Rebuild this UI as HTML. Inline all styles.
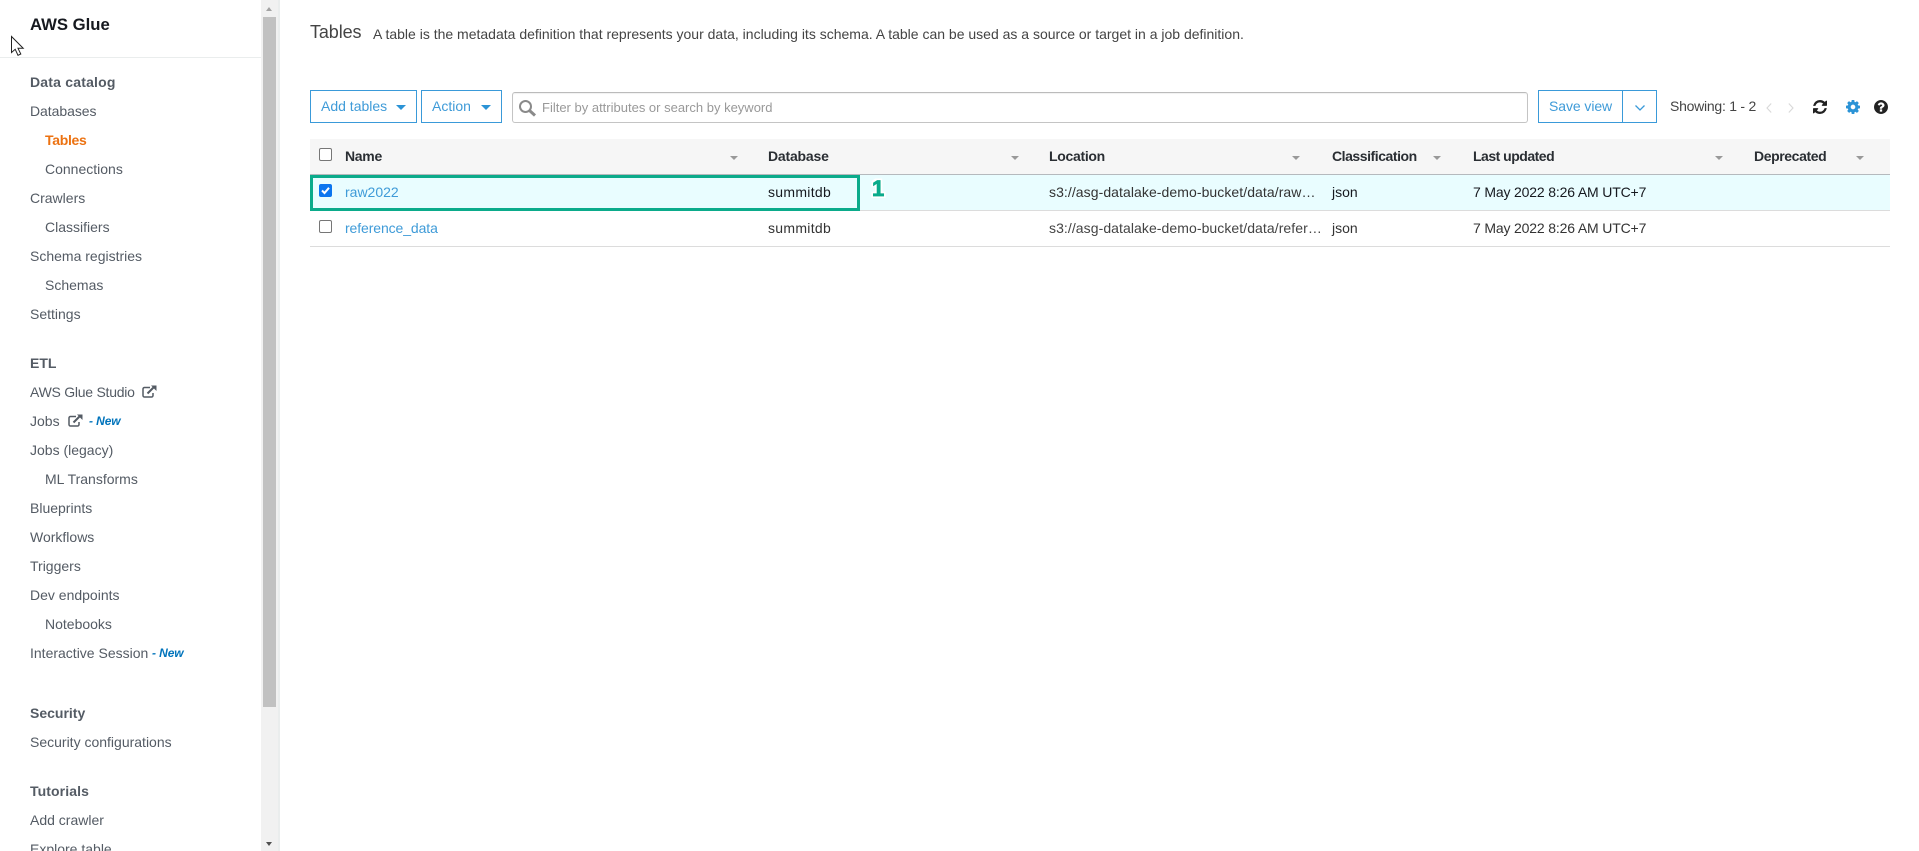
<!DOCTYPE html>
<html><head><meta charset="utf-8"><title>AWS Glue Tables</title>
<style>
html,body{margin:0;padding:0;background:#fff;width:1919px;height:851px;overflow:hidden}
body{position:relative;font-family:"Liberation Sans",Arial,sans-serif;font-size:14px;color:#545b64}
.t{position:absolute;line-height:20px;white-space:nowrap}
.b{font-weight:bold}
.h{font-weight:bold;color:#2a2e33;letter-spacing:-.3px}
.d{color:#16191f}
.l{color:#3f9bd8}
.r{position:absolute}
.c{position:absolute;width:0;height:0;border-left:4px solid transparent;border-right:4px solid transparent;border-top:4px solid #999}
.bc{position:absolute;width:0;height:0;border-left:5px solid transparent;border-right:5px solid transparent;border-top:5px solid #2b93d6}
.cb{position:absolute;box-sizing:border-box;left:319px;width:13px;height:13px;border:1px solid #767676;border-radius:2px;background:#fff}
svg{position:absolute;display:block}
.n{position:absolute;color:#0073bb;font-weight:bold;font-style:italic;font-size:12px;line-height:20px;white-space:nowrap;letter-spacing:-.1px}
</style></head><body>

<!-- sidebar -->
<div class="r" style="left:0;top:57px;width:261px;height:1px;background:#eaeded"></div>
<div class="r" style="left:261px;top:0;width:17px;height:851px;background:#f1f1f1"></div>
<div class="r" style="left:278px;top:0;width:2px;height:851px;background:#eaeded"></div>
<div class="r" style="left:263px;top:17px;width:13px;height:690px;background:#c1c1c1"></div>
<div class="r" style="left:266px;top:7px;width:0;height:0;border-left:3.5px solid transparent;border-right:3.5px solid transparent;border-bottom:4px solid #a3a3a3"></div>
<div class="r" style="left:266px;top:842px;width:0;height:0;border-left:3.5px solid transparent;border-right:3.5px solid transparent;border-top:4px solid #505050"></div>

<div class="t b" style="left:30px;top:15px;font-size:16.7px;color:#16191f">AWS Glue</div>
<div class="t b" style="left:30px;top:72px;color:#545b64;letter-spacing:.2px">Data catalog</div>
<div class="t" style="left:30px;top:101px;letter-spacing:-.05px">Databases</div>
<div class="t b" style="left:45px;top:130px;color:#ec7211;letter-spacing:-.3px">Tables</div>
<div class="t" style="left:45px;top:159px">Connections</div>
<div class="t" style="left:30px;top:188px">Crawlers</div>
<div class="t" style="left:45px;top:217px">Classifiers</div>
<div class="t" style="left:30px;top:246px">Schema registries</div>
<div class="t" style="left:45px;top:275px">Schemas</div>
<div class="t" style="left:30px;top:304px">Settings</div>
<div class="t b" style="left:30px;top:353px">ETL</div>
<div class="t" style="left:30px;top:382px;letter-spacing:-.25px">AWS Glue Studio</div>
<div class="t" style="left:30px;top:411px">Jobs</div>
<div class="t" style="left:30px;top:440px">Jobs (legacy)</div>
<div class="t" style="left:45px;top:469px">ML Transforms</div>
<div class="t" style="left:30px;top:498px">Blueprints</div>
<div class="t" style="left:30px;top:527px">Workflows</div>
<div class="t" style="left:30px;top:556px">Triggers</div>
<div class="t" style="left:30px;top:585px">Dev endpoints</div>
<div class="t" style="left:45px;top:614px">Notebooks</div>
<div class="t" style="left:30px;top:643px">Interactive Session</div>
<div class="t b" style="left:30px;top:703px">Security</div>
<div class="t" style="left:30px;top:732px">Security configurations</div>
<div class="t b" style="left:30px;top:781px;letter-spacing:.1px">Tutorials</div>
<div class="t" style="left:30px;top:810px">Add crawler</div>
<div class="t" style="left:30px;top:839px">Explore table</div>

<div class="n" style="left:89px;top:411px">- New</div>
<div class="n" style="left:152px;top:643px">- New</div>

<svg style="left:142px;top:385px" width="15" height="13" viewBox="0 0 15 13" fill="none" stroke="#545b64"><path d="M8 2.500H2.500a1.500 1.500 0 0 0-1.500 1.500v6.500a1.500 1.500 0 0 0 1.500 1.500h7a1.500 1.500 0 0 0 1.500-1.500V8" stroke-width="1.500"/><path d="M5.500 8.500L12 2" stroke-width="2"/><path d="M9 .5h5.500V6z" fill="#545b64" stroke="none"/></svg>
<svg style="left:68px;top:414px" width="15" height="13" viewBox="0 0 15 13" fill="none" stroke="#545b64"><path d="M8 2.500H2.500a1.500 1.500 0 0 0-1.500 1.500v6.500a1.500 1.500 0 0 0 1.500 1.500h7a1.500 1.500 0 0 0 1.500-1.500V8" stroke-width="1.500"/><path d="M5.500 8.500L12 2" stroke-width="2"/><path d="M9 .5h5.500V6z" fill="#545b64" stroke="none"/></svg>

<!-- cursor -->
<svg style="left:10px;top:35px" width="15" height="22" viewBox="0 0 15 22"><path d="M1.500 1.500V17.500L5.200 14.300L8 20.300L10.800 19L8 13.300H13.200Z" fill="#fff" stroke="#222" stroke-width="1"/></svg>

<!-- header -->
<div class="t" style="left:310px;top:22px;font-size:18px;color:#444;letter-spacing:-.1px">Tables</div>
<div class="t" style="left:373px;top:24px;font-size:14px;color:#444">A table is the metadata definition that represents your data, including its schema. A table can be used as a source or target in a job definition.</div>

<!-- toolbar -->
<div class="r" style="box-sizing:border-box;left:310px;top:90px;width:107px;height:33px;border:1px solid #3a9ad9"></div>
<div class="t l" style="left:321px;top:96px">Add tables</div>
<div class="bc" style="left:396px;top:105px"></div>
<div class="r" style="box-sizing:border-box;left:421px;top:90px;width:81px;height:33px;border:1px solid #3a9ad9"></div>
<div class="t l" style="left:432px;top:96px">Action</div>
<div class="bc" style="left:481px;top:105px"></div>

<div class="r" style="box-sizing:border-box;left:512px;top:92px;width:1016px;height:31px;border:1px solid #c4c4c4;border-top-color:#bbb;border-radius:3px;box-shadow:inset 0 1px 1px rgba(0,0,0,.06)"></div>
<svg style="left:518px;top:99px" width="19" height="18" viewBox="0 0 19 18" fill="none" stroke="#8a8a8a"><circle cx="7.500" cy="7.500" r="5.500" stroke-width="2"/><path d="M11.500 11.500L17 16.500" stroke-width="3"/></svg>
<div class="t" style="left:542px;top:98px;font-size:13px;color:#999">Filter by attributes or search by keyword</div>

<div class="r" style="box-sizing:border-box;left:1538px;top:90px;width:85px;height:33px;border:1px solid #3a9ad9"></div>
<div class="r" style="box-sizing:border-box;left:1622px;top:90px;width:35px;height:33px;border:1px solid #3a9ad9"></div>
<div class="t l" style="left:1549px;top:96px;letter-spacing:-.08px">Save view</div>
<svg style="left:1634px;top:104px" width="12" height="8" viewBox="0 0 12 8" fill="none" stroke="#3a9ad9" stroke-width="1.300"><path d="M1.500 1.500L6 6L10.500 1.500"/></svg>
<div class="t" style="left:1670px;top:96px;color:#444;letter-spacing:-.25px">Showing: 1 - 2</div>
<svg style="left:1766px;top:103px" width="6" height="10" viewBox="0 0 6 10" fill="none" stroke="#d8d8d8" stroke-width="1.100"><path d="M5.200 .5L1 5L5.200 9.500"/></svg>
<svg style="left:1788px;top:103px" width="6" height="10" viewBox="0 0 6 10" fill="none" stroke="#d8d8d8" stroke-width="1.100"><path d="M.8 .5L5 5L.8 9.500"/></svg>
<svg style="left:1813px;top:100px" width="14" height="14" viewBox="128 128 1536 1536" fill="#222"><path d="M1639 1056q0 5-1 7-64 268-268 434.500t-478 166.500q-146 0-282.500-55t-243.500-157l-129 129q-19 19-45 19t-45-19-19-45v-448q0-26 19-45t45-19h448q26 0 45 19t19 45-19 45l-137 137q71 66 161 102t187 36q134 0 250-65t186-179q11-17 53-117 8-23 30-23h192q13 0 22.500 9.500t9.500 22.500zm25-800v448q0 26-19 45t-45 19h-448q-26 0-45-19t-19-45 19-45l138-138q-148-137-349-137-134 0-250 65t-186 179q-11 17-53 117-8 23-30 23h-199q-13 0-22.500-9.500t-9.500-22.500v-7q65-268 270-434.500t480-166.500q146 0 284 55.500t245 156.500l130-129q19-19 45-19t45 19 19 45z"/></svg>
<svg style="left:1846px;top:100px" width="14" height="14" viewBox="128 128 1536 1536" fill="#2b93d6"><path d="M1152 896q0-106-75-181t-181-75-181 75-75 181 75 181 181 75 181-75 75-181zm512-109v222q0 12-8 23t-20 13l-185 28q-19 54-39 91 35 50 107 138 10 12 10 25t-9 23q-27 37-99 108t-94 71q-12 0-26-9l-138-108q-44 23-91 38-16 136-29 186-7 28-36 28h-222q-14 0-24.500-8.500t-11.500-21.500l-28-184q-49-16-90-37l-141 107q-10 9-25 9-14 0-25-11-126-114-165-168-7-10-7-23 0-12 8-23 15-21 51-66.500t54-70.500q-27-50-41-99l-183-27q-13-2-21-12.500t-8-23.500v-222q0-12 8-23t19-13l186-28q14-46 39-92-40-57-107-138-10-12-10-24 0-10 9-23 26-36 98.500-107.500t94.500-71.500q13 0 26 10l138 107q44-23 91-38 16-136 29-186 7-28 36-28h222q14 0 24.500 8.500t11.500 21.500l28 184q49 16 90 37l142-107q9-9 24-9 13 0 25 10 129 119 165 170 7 8 7 22 0 12-8 23-15 21-51 66.500t-54 70.500q26 50 41 98l183 28q13 2 21 12.500t8 23.500z"/></svg>
<svg style="left:1874px;top:100px" width="14" height="14" viewBox="128 128 1536 1536" fill="#222"><path d="M1024 1376v-192q0-14-9-23t-23-9h-192q-14 0-23 9t-9 23v192q0 14 9 23t23 9h192q14 0 23-9t9-23zm256-672q0-88-55.500-163t-138.500-116-170-41q-243 0-371 213-15 24 8 42l132 100q7 6 19 6 16 0 25-12 53-68 86-92 34-24 86-24 48 0 85.500 26t37.500 59q0 38-20 61t-68 45q-63 28-115.500 86.500t-52.500 125.500v36q0 14 9 23t23 9h192q14 0 23-9t9-23q0-19 21.500-49.500t54.500-49.500q32-18 49-28.500t46-35 44.500-48 28-60.500 12.500-81zm384 192q0 209-103 385.500t-279.500 279.500-385.500 103-385.500-103-279.500-279.500-103-385.500 103-385.500 279.500-279.500 385.500-103 385.500 103 279.500 279.500 103 385.500z"/></svg>

<!-- table -->
<div class="r" style="left:310px;top:139px;width:1580px;height:35px;background:#f6f6f6"></div>
<div class="r" style="left:310px;top:174px;width:1580px;height:1px;background:#b5b9bd"></div>
<div class="r" style="left:310px;top:175px;width:1580px;height:35px;background:#e9fdff"></div>
<div class="r" style="left:310px;top:210px;width:1580px;height:1px;background:#dcdcdc"></div>
<div class="r" style="left:310px;top:246px;width:1580px;height:1px;background:#dcdcdc"></div>

<div class="cb" style="top:148px"></div>
<div class="t h" style="left:345px;top:146px">Name</div>
<div class="t h" style="left:768px;top:146px;letter-spacing:-.2px">Database</div>
<div class="t h" style="left:1049px;top:146px">Location</div>
<div class="t h" style="left:1332px;top:146px;letter-spacing:-.45px">Classification</div>
<div class="t h" style="left:1473px;top:146px;letter-spacing:-.5px">Last updated</div>
<div class="t h" style="left:1754px;top:146px;letter-spacing:-.4px">Deprecated</div>
<div class="c" style="left:730px;top:156px"></div>
<div class="c" style="left:1011px;top:156px"></div>
<div class="c" style="left:1292px;top:156px"></div>
<div class="c" style="left:1433px;top:156px"></div>
<div class="c" style="left:1715px;top:156px"></div>
<div class="c" style="left:1856px;top:156px"></div>

<div class="cb" style="top:184px;background:#0b76ef;border-color:#0b76ef"></div>
<svg style="left:319px;top:184px" width="13" height="13" viewBox="0 0 13 13" fill="none" stroke="#fff" stroke-width="2"><path d="M3 6.500L5.500 9L10 3.800"/></svg>
<div class="t l" style="left:345px;top:182px">raw2022</div>
<div class="t d" style="left:768px;top:182px;letter-spacing:.3px">summitdb</div>
<div class="t" style="left:1049px;top:182px;color:#333;letter-spacing:.07px">s3://asg-datalake-demo-bucket/data/raw…</div>
<div class="t d" style="left:1332px;top:182px">json</div>
<div class="t d" style="left:1473px;top:182px;letter-spacing:-.16px">7 May 2022 8:26 AM UTC+7</div>

<div class="cb" style="top:220px"></div>
<div class="t l" style="left:345px;top:218px;letter-spacing:-.1px">reference_data</div>
<div class="t d" style="left:768px;top:218px;color:#333;letter-spacing:.3px">summitdb</div>
<div class="t" style="left:1049px;top:218px;color:#444;letter-spacing:.07px">s3://asg-datalake-demo-bucket/data/refer…</div>
<div class="t" style="left:1332px;top:218px;color:#333">json</div>
<div class="t" style="left:1473px;top:218px;color:#333;letter-spacing:-.16px">7 May 2022 8:26 AM UTC+7</div>

<!-- annotation -->
<div class="r" style="box-sizing:border-box;left:310px;top:175px;width:550px;height:36px;border:3px solid #0bab8b"></div>
<div class="t b" style="left:872px;top:178px;font-size:22px;line-height:22px;color:#0bab8b;-webkit-text-stroke:.8px #0bab8b;text-shadow:-2px 0 #fff,2px 0 #fff,0 -2px #fff,0 2px #fff,-2px -2px #fff,2px 2px #fff,-2px 2px #fff,2px -2px #fff">1</div>

</body></html>
